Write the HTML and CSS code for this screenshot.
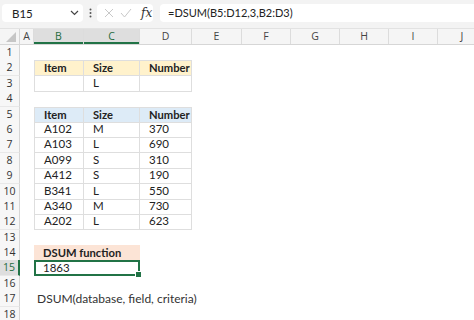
FILE: index.html
```html
<!DOCTYPE html>
<html>
<head>
  <title>DSUM function</title>
  <link rel="stylesheet" href="styles.css">
</head>
<body>

<div class="toolbar">
  <div class="namebox">
    <span>B15</span>
    <svg class="chev" width="9" height="6" viewBox="0 0 9 6"><path d="M1 1 L4.5 4.5 L8 1" fill="none" stroke="#444" stroke-width="1.2"/></svg>
  </div>
  <svg class="grip" width="3" height="10" viewBox="0 0 3 10"><circle cx="1.5" cy="1.5" r="1" fill="#555"/><circle cx="1.5" cy="5" r="1" fill="#555"/><circle cx="1.5" cy="8.5" r="1" fill="#555"/></svg>
  <div class="fnbox">
    <svg width="10" height="10" viewBox="0 0 10 10"><path d="M1 1 L9 9 M9 1 L1 9" stroke="#c8c8c8" stroke-width="1"/></svg>
    <svg width="12" height="10" viewBox="0 0 12 10"><path d="M1 5 L4.5 9 L11 1" fill="none" stroke="#c8c8c8" stroke-width="1"/></svg>
    <span class="fx">fx</span>
  </div>
  <div class="formula">=DSUM(B5:D12,3,B2:D3)</div>
</div>

<div class="sheet">
  <div class="row colheads">
    <div class="corner"><span class="tri"></span></div>
    <div class="ch">A</div>
    <div class="ch sel">B</div>
    <div class="ch sel">C</div>
    <div class="ch">D</div>
    <div class="ch">E</div>
    <div class="ch">F</div>
    <div class="ch">G</div>
    <div class="ch">H</div>
    <div class="ch">I</div>
    <div class="ch">J</div>
  </div>

  <div class="row"><div class="rh">1</div></div>
  <div class="row">
    <div class="rh">2</div><div></div>
    <div class="c head crit first top">Item</div>
    <div class="c head crit top">Size</div>
    <div class="c head crit top">Number</div>
  </div>
  <div class="row">
    <div class="rh">3</div><div></div>
    <div class="c first"></div>
    <div class="c">L</div>
    <div class="c"></div>
  </div>
  <div class="row"><div class="rh">4</div></div>
  <div class="row">
    <div class="rh">5</div><div></div>
    <div class="c head data first top">Item</div>
    <div class="c head data top">Size</div>
    <div class="c head data top">Number</div>
  </div>
  <div class="row">
    <div class="rh">6</div><div></div>
    <div class="c first">A102</div><div class="c">M</div><div class="c">370</div>
  </div>
  <div class="row">
    <div class="rh">7</div><div></div>
    <div class="c first">A103</div><div class="c">L</div><div class="c">690</div>
  </div>
  <div class="row">
    <div class="rh">8</div><div></div>
    <div class="c first">A099</div><div class="c">S</div><div class="c">310</div>
  </div>
  <div class="row">
    <div class="rh">9</div><div></div>
    <div class="c first">A412</div><div class="c">S</div><div class="c">190</div>
  </div>
  <div class="row">
    <div class="rh">10</div><div></div>
    <div class="c first">B341</div><div class="c">L</div><div class="c">550</div>
  </div>
  <div class="row">
    <div class="rh">11</div><div></div>
    <div class="c first">A340</div><div class="c">M</div><div class="c">730</div>
  </div>
  <div class="row">
    <div class="rh">12</div><div></div>
    <div class="c first">A202</div><div class="c">L</div><div class="c">623</div>
  </div>
  <div class="row"><div class="rh">13</div></div>
  <div class="row">
    <div class="rh">14</div><div></div>
    <div class="result-label">DSUM function</div>
  </div>
  <div class="row">
    <div class="rh sel">15</div><div></div>
    <div class="result">1863<span class="handle"></span></div>
  </div>
  <div class="row"><div class="rh">16</div></div>
  <div class="row">
    <div class="rh">17</div><div></div>
    <div class="syntax">DSUM(database, field, criteria)</div>
  </div>
  <div class="row"><div class="rh">18</div></div>
</div>

</body>
</html>
```

FILE: styles.css
```css
body {
  margin: 0;
  width: 474px;
  height: 320px;
  overflow: hidden;
  background: #fff;
  font-family: "Open Sans", "Noto Sans", sans-serif;
}

/* formula bar */
.toolbar {
  height: 28px;
  background: #f3f3f3;
  display: flex;
  align-items: flex-start;
  padding-top: 4px;
  box-sizing: border-box;
}
.namebox {
  margin-left: 2px;
  width: 81px;
  height: 18px;
  background: #fff;
  border-radius: 4px;
  display: flex;
  align-items: center;
  justify-content: space-between;
  padding: 0 4px 0 10px;
  box-sizing: border-box;
  font-family: Lato, sans-serif;
  font-size: 11.5px;
  color: #222;
}
.grip { margin: 4px 5px 0 6px; }
.fnbox {
  width: 56px;
  height: 18px;
  background: #fff;
  border-radius: 4px;
  display: flex;
  align-items: center;
  gap: 6px;
  padding-left: 7px;
  box-sizing: border-box;
}
.fx {
  font-family: "DejaVu Serif", "Liberation Serif", serif;
  font-style: italic;
  font-size: 12px;
  color: #333;
  margin-left: 3px;
}
.formula {
  flex: 1;
  margin-left: 7px;
  height: 18px;
  background: #fff;
  border-radius: 4px 0 0 4px;
  padding-left: 8px;
  font-family: Lato, sans-serif;
  font-size: 11px;
  line-height: 18px;
  color: #222;
}

/* grid */
.row {
  display: grid;
  grid-template-columns: 20px 14px 50px 56px 52px 50px 49px 49px 49px 49px 49px;
  height: 15.4px;
  font-family: Lato, "Liberation Sans", sans-serif;
  font-size: 11.5px;
  color: #222;
}
.colheads {
  height: 15px;
  background: #f5f5f5;
  border-top: 1px solid #e2e2e2;
  border-bottom: 1px solid #d6d6d6;
  font-family: "Open Sans", "Noto Sans", sans-serif;
  font-size: 10.5px;
  color: #444;
}
.corner {
  position: relative;
  border-right: 1px solid #d6d6d6;
}
.tri {
  position: absolute;
  right: 3px;
  bottom: 2px;
  width: 0;
  height: 0;
  border-left: 10px solid transparent;
  border-bottom: 10px solid #c6c6c6;
}
.ch {
  text-align: center;
  line-height: 15px;
  border-right: 1px solid #dcdcdc;
}
.ch.sel {
  background: #dedede;
  color: #1e6b40;
  box-shadow: inset 0 -2px 0 #217346;
}
.rh {
  background: #f7f7f7;
  border-right: 1px solid #d6d6d6;
  border-bottom: 1px solid #e8e8e8;
  box-sizing: border-box;
  text-align: center;
  font-family: "Open Sans", "Noto Sans", sans-serif;
  font-size: 10.5px;
  line-height: 15px;
  color: #333;
}
.rh.sel {
  background: #dedede;
  color: #1e6b40;
  border-right: 2px solid #217346;
}

/* table cells */
.c {
  padding-left: 9px;
  line-height: 14px;
  border-right: 1px solid #dedede;
  border-bottom: 1px solid #dedede;
  box-sizing: border-box;
}
.c.first { border-left: 1px solid #dedede; }
.c.top { border-top: 1px solid #dedede; }
.head { font-weight: bold; font-size: 11.2px; line-height: 13px; }
.crit { background: #fff2cc; }
.data { background: #ddebf7; }

.result-label {
  grid-column: 3 / span 2;
  background: #fce4d6;
  font-weight: bold;
  font-size: 11.2px;
  padding-left: 9px;
  line-height: 15px;
}
.result {
  grid-column: 3 / span 2;
  position: relative;
  border: 2px solid #217346;
  padding-left: 7px;
  line-height: 12px;
  box-sizing: border-box;
}
.handle {
  position: absolute;
  right: -4px;
  bottom: -4px;
  width: 5px;
  height: 5px;
  background: #217346;
  border: 1px solid #fff;
}
.syntax {
  grid-column: 3 / span 6;
  padding-left: 3px;
  font-size: 12px;
  line-height: 15px;
  white-space: nowrap;
  color: #333;
}
```
